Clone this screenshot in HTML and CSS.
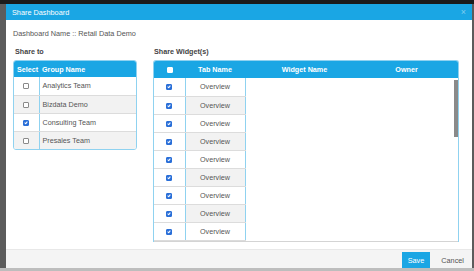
FILE: index.html
```html
<!DOCTYPE html>
<html lang="en">
<head>
    <meta charset="UTF-8">
    <title>Share Dashboard</title>
    <link rel="stylesheet" href="styles.css">
</head>
<body>

<div class="modal">
    <div class="modal-header">
        <span>Share Dashboard</span>
        <span class="modal-close">&times;</span>
    </div>

    <div class="modal-body">
        <div class="dash-name">Dashboard Name :: Retail Data Demo</div>

        <div class="share-grid">
            <!-- groups -->
            <div>
                <div class="panel-label label-left">Share to</div>
                <div class="group-box">
                    <table class="grid-table group-table">
                        <colgroup><col style="width: 25px"><col></colgroup>
                        <tr><th>Select</th><th>Group Name</th></tr>
                        <tr><td class="cb"><input type="checkbox"></td><td>Analytics Team</td></tr>
                        <tr><td class="cb"><input type="checkbox"></td><td>Bizdata Demo</td></tr>
                        <tr><td class="cb"><input type="checkbox" checked></td><td>Consulting Team</td></tr>
                        <tr><td class="cb"><input type="checkbox"></td><td>Presales Team</td></tr>
                    </table>
                </div>
            </div>

            <!-- widgets -->
            <div>
                <div class="panel-label label-right">Share Widget(s)</div>
                <div class="widget-box">
                    <table class="grid-table widget-head">
                        <colgroup><col style="width: 31px"><col style="width: 60px"><col style="width: 119px"><col></colgroup>
                        <tr>
                            <th><input type="checkbox" class="head-check"></th>
                            <th>Tab Name</th>
                            <th>Widget Name</th>
                            <th class="owner-head">Owner</th>
                        </tr>
                    </table>
                    <div class="widget-body">
                        <div class="widget-scroll">
                            <table class="grid-table widget-table">
                                <colgroup><col style="width: 31px"><col style="width: 60px"><col style="width: 119px"><col></colgroup>
                                <tr><td class="cb"><input type="checkbox" checked></td><td class="tab">Overview</td><td></td><td></td></tr>
                                <tr><td class="cb"><input type="checkbox" checked></td><td class="tab">Overview</td><td></td><td></td></tr>
                                <tr><td class="cb"><input type="checkbox" checked></td><td class="tab">Overview</td><td></td><td></td></tr>
                                <tr><td class="cb"><input type="checkbox" checked></td><td class="tab">Overview</td><td></td><td></td></tr>
                                <tr><td class="cb"><input type="checkbox" checked></td><td class="tab">Overview</td><td></td><td></td></tr>
                                <tr><td class="cb"><input type="checkbox" checked></td><td class="tab">Overview</td><td></td><td></td></tr>
                                <tr><td class="cb"><input type="checkbox" checked></td><td class="tab">Overview</td><td></td><td></td></tr>
                                <tr><td class="cb"><input type="checkbox" checked></td><td class="tab">Overview</td><td></td><td></td></tr>
                                <tr><td class="cb"><input type="checkbox" checked></td><td class="tab">Overview</td><td></td><td></td></tr>
                            </table>
                        </div>
                        <div class="scroll-track"><div class="scroll-thumb"></div></div>
                    </div>
                </div>
            </div>
        </div>
    </div>

    <div class="modal-footer">
        <button class="btn btn-primary">Save</button>
        <button class="btn">Cancel</button>
    </div>
</div>

</body>
</html>
```

FILE: styles.css
```css
* {
    box-sizing: border-box;
}

html {
    height: 100%;
    background: linear-gradient(to bottom, #1b1b1b 0, #1b1b1b 4px, #5c5c5c 4px, #5c5c5c 268px, #bdbdbd 268px);
}

body {
    margin: 0;
    padding: 4px 2px 0 6px;
    font-family: "Liberation Sans", Arial, sans-serif;
    font-size: 7.2px;
    color: #555;
}

.modal {
    width: 466px;
    height: 264px;
    background: #fff;
    display: flex;
    flex-direction: column;
}

.modal-header {
    flex: none;
    height: 16px;
    padding: 0 6px;
    background: #1aa6e4;
    color: #fff;
    font-size: 7.3px;
    display: flex;
    align-items: center;
    justify-content: space-between;
}

.modal-close {
    color: rgba(255, 255, 255, 0.45);
    font-size: 9px;
}

.modal-body {
    flex: 1;
    padding: 9px 13px 0 7px;
}

.dash-name {
    line-height: 10px;
    font-size: 7.3px;
    margin-bottom: 8px;
}

.share-grid {
    display: grid;
    grid-template-columns: 124px 306px;
    column-gap: 16px;
}

.panel-label {
    line-height: 10px;
    font-weight: bold;
    color: #444;
    margin-bottom: 3px;
}
.label-left {
    padding-left: 2px;
}
.label-right {
    padding-left: 1px;
}

/* tables */
.grid-table {
    width: 100%;
    border-collapse: collapse;
    table-layout: fixed;
}

.grid-table th {
    height: 17px;
    padding: 0 3px;
    background: #1aa6e4;
    color: #fff;
    font-weight: bold;
    text-align: left;
}

.grid-table td {
    height: 18px;
    padding: 0 3px;
}

.grid-table td.cb {
    padding: 0;
    text-align: center;
}

/* small square checkboxes */
input[type="checkbox"] {
    -webkit-appearance: none;
    appearance: none;
    position: relative;
    width: 6px;
    height: 6px;
    margin: 0;
    vertical-align: middle;
    border: 1px solid #8a8a8a;
    border-radius: 1px;
    background: #fff;
}
input[type="checkbox"]:checked {
    border-color: #2a6fd8;
    background: #2a6fd8;
}
input[type="checkbox"]:checked::after {
    content: "";
    position: absolute;
    left: 1px;
    top: 0;
    width: 1px;
    height: 2px;
    border: solid #fff;
    border-width: 0 1px 1px 0;
    transform: rotate(40deg);
}
input.head-check {
    border-color: #fff;
}

.group-box {
    border: 1px solid #8fd2f0;
    border-radius: 3px;
    overflow: hidden;
}

.group-table th {
    height: 16px;
}

.group-table td {
    border-bottom: 1px solid #dcdcdc;
}
.group-table td.cb {
    border-right: 1px solid #8fd2f0;
}
.group-table tr:nth-child(odd) td {
    background: #f2f2f2;
}
.group-table tr:last-child td {
    border-bottom: none;
}

.widget-box {
    border: 1px solid #8fd2f0;
    border-bottom: none;
    border-radius: 3px 3px 0 0;
    overflow: hidden;
}

.widget-head th {
    text-align: center;
}
.widget-head th.owner-head {
    padding-right: 12px;
}

.widget-body {
    display: flex;
    height: 164px;
    border-bottom: 1px solid #d4d4d4;
}

.widget-scroll {
    flex: 1;
    overflow: hidden;
}

.scroll-track {
    flex: none;
    width: 4px;
    padding-top: 2px;
    background: #fff;
}
.scroll-thumb {
    height: 57px;
    background: #8a8a8a;
}

.widget-table td.cb,
.widget-table td.tab {
    border-right: 1px solid #8fd2f0;
    border-bottom: 1px solid #dcdcdc;
}
.widget-table td.tab {
    text-align: center;
}
.widget-table tr:nth-child(even) td.tab {
    background: #f2f2f2;
}

/* footer */
.modal-footer {
    flex: none;
    height: 19px;
    padding-right: 2px;
    background: #f4f4f4;
    border-top: 1px solid #e8e8e8;
    display: flex;
    justify-content: flex-end;
    align-items: flex-end;
    gap: 5px;
}

.btn {
    height: 16px;
    padding: 0 6px;
    border: none;
    background: none;
    font-family: inherit;
    font-size: 7.3px;
    color: #555;
    cursor: pointer;
}

.btn-primary {
    background: #1aa6e4;
    color: #fff;
}
```
